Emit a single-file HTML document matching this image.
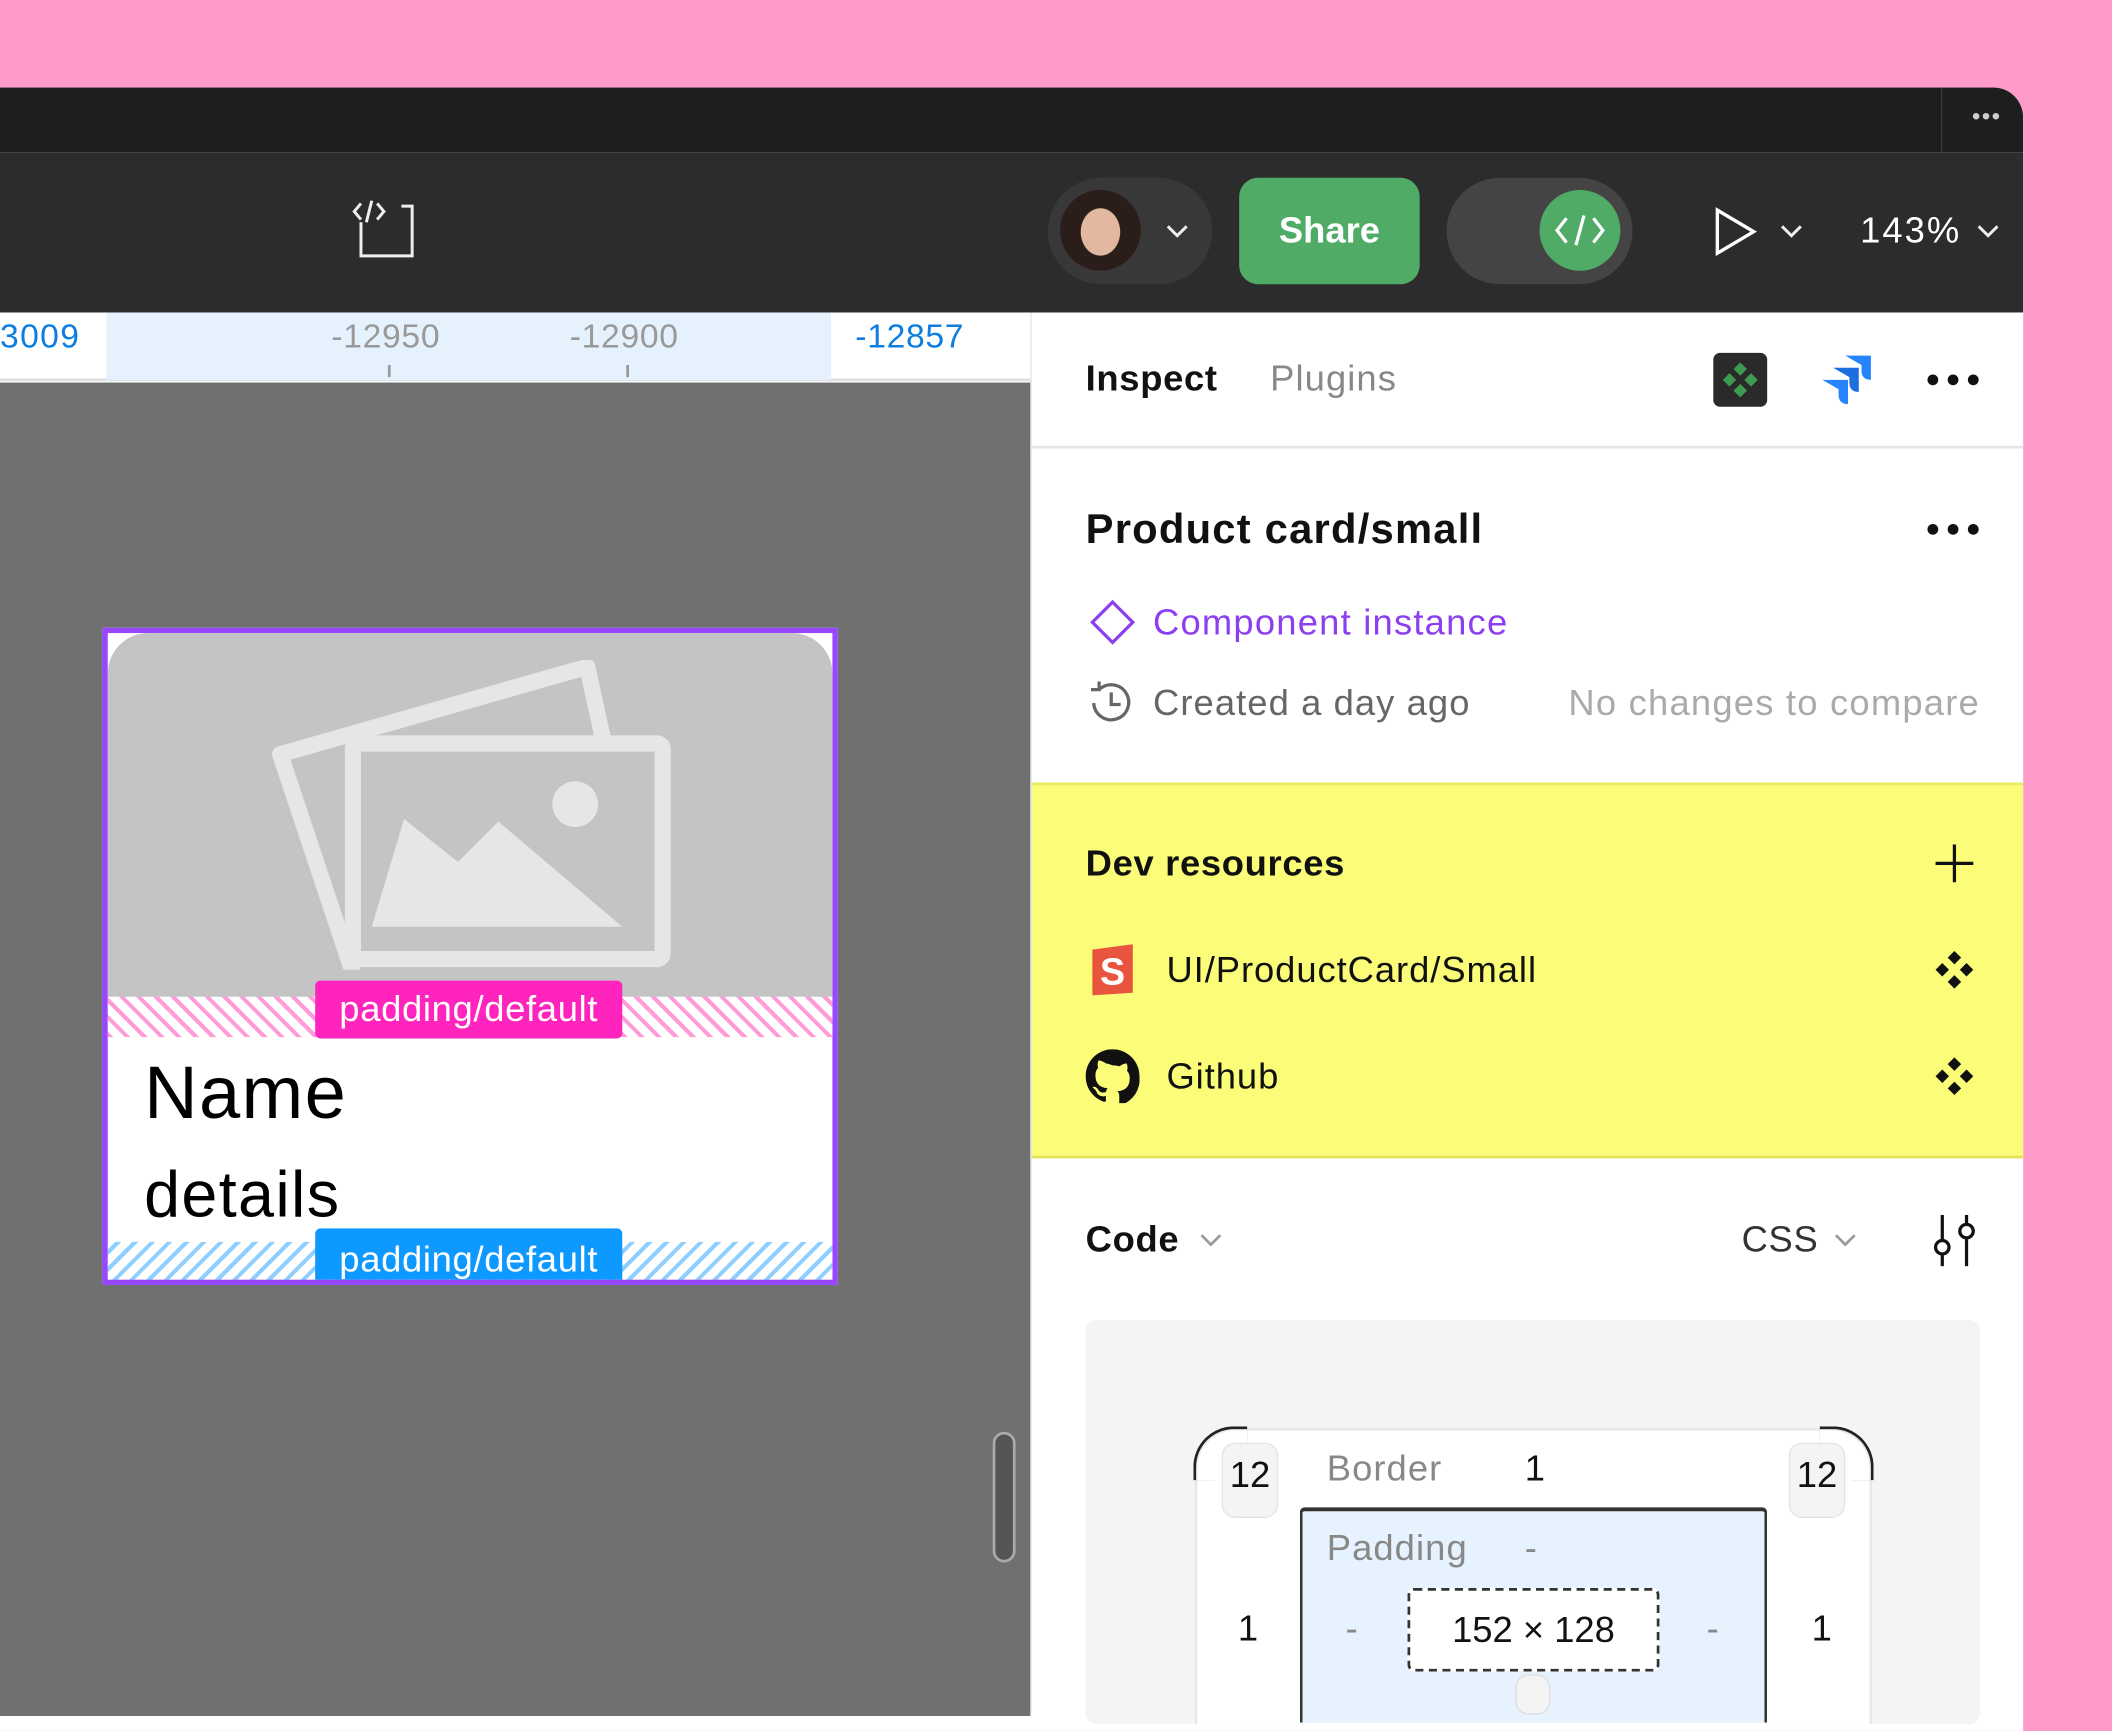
<!DOCTYPE html>
<html><head><meta charset="utf-8"><style>
*{margin:0;padding:0;box-sizing:border-box}
html,body{width:2112px;height:1688px;overflow:hidden;background:#ff9bc8;font-family:"Liberation Sans",sans-serif}
#s{position:absolute;left:0;top:0;width:1568px;height:1254px;transform:scale(1.34694);transform-origin:0 0}
.a{position:absolute}
.t{position:absolute;white-space:nowrap;line-height:1;letter-spacing:0.5px}
</style></head><body><div id="s">
<div class="a" style="left:0;top:65px;width:1502px;height:1220px;background:#fff;border-top-right-radius:22px;overflow:hidden">
 <div class="a" style="left:0;top:0;width:1502px;height:48px;background:#1e1e1e"></div>
 <div class="a" style="left:1441px;top:0;width:1px;height:48px;background:#3a3a3a"></div>
 <div class="t" style="left:1464px;top:12px;color:#ccc;font-size:18px;letter-spacing:1px">•••</div>
 <div class="a" style="left:0;top:48px;width:1502px;height:119px;background:#2c2c2c"></div>
</div>
<svg class="a" style="left:258px;top:145px" width="54" height="50" viewBox="0 0 54 50" fill="none" stroke="#eee" stroke-width="2.2"><path d="M10 6 L5 12 L10 18 M22 6 L27 12 L22 18 M18 4 L14 20"/><path d="M10 20 V45 H48 V8 H40"/></svg>
<div class="a" style="left:778px;top:132px;width:122px;height:79px;border-radius:40px;background:#383838"></div>
<div class="a" style="left:787px;top:141px;width:60px;height:60px;border-radius:50%;background:radial-gradient(ellipse 40% 48% at 50% 52%,#e2b8a0 0 60%,#2a1d1a 62% 100%),#7a4a3e"></div>
<svg class="a" style="left:864px;top:164px" width="20" height="14"><path d="M3 4 L10 11 L17 4" stroke="#eee" stroke-width="2.2" fill="none"/></svg>
<div class="a" style="left:920px;top:132px;width:134px;height:79px;border-radius:14px;background:#4fab66"></div>
<div class="t" style="left:920px;top:158px;width:134px;text-align:center;color:#fff;font-size:27px;font-weight:bold;letter-spacing:0">Share</div>
<div class="a" style="left:1074px;top:132px;width:138px;height:79px;border-radius:40px;background:#444"></div>
<div class="a" style="left:1143px;top:141px;width:60px;height:60px;border-radius:50%;background:#4fab66"></div>
<svg class="a" style="left:1153px;top:156px" width="40" height="30" fill="none" stroke="#fff" stroke-width="2.4"><path d="M10 6 L3 15 L10 24 M30 6 L37 15 L30 24 M23 4 L17 26"/></svg>
<svg class="a" style="left:1270px;top:152px" width="36" height="40" fill="none" stroke="#fff" stroke-width="2.5"><path d="M5 4 V36 L32 20 Z"/></svg>
<svg class="a" style="left:1320px;top:164px" width="20" height="14"><path d="M3 4 L10 11 L17 4" stroke="#eee" stroke-width="2.2" fill="none"/></svg>
<div class="t" style="left:1381px;top:158px;color:#fff;font-size:27px;letter-spacing:1.5px">143%</div>
<svg class="a" style="left:1466px;top:164px" width="20" height="14"><path d="M3 4 L10 11 L17 4" stroke="#eee" stroke-width="2.2" fill="none"/></svg>
<div class="a" style="left:0;top:232px;width:765px;height:51px;background:#fff;border-bottom:2px solid #e0e0e0"></div>
<div class="a" style="left:79px;top:232px;width:538px;height:50px;background:#e5f2fd"></div>
<div class="t" style="left:0;top:238px;color:#0d7de0;font-size:25px;letter-spacing:1px">3009</div>
<div class="t" style="left:246px;top:238px;color:#999;font-size:25px">-12950</div>
<div class="t" style="left:423px;top:238px;color:#999;font-size:25px">-12900</div>
<div class="t" style="left:635px;top:238px;color:#0d7de0;font-size:25px">-12857</div>
<div class="a" style="left:288px;top:271px;width:2px;height:9px;background:#999"></div>
<div class="a" style="left:465px;top:271px;width:2px;height:9px;background:#999"></div>
<div class="a" style="left:0;top:284px;width:765px;height:990px;background:#707070"></div>
<div class="a" style="left:737px;top:1063px;width:17px;height:97px;border:2px solid #aaa;border-radius:9px;background:#555"></div>
<div class="a" style="left:76px;top:466px;width:546px;height:488px;border:4px solid #9747ff;background:#fff;overflow:hidden">
 <div class="a" style="left:0;top:0;width:538px;height:272px;background:#c4c4c4;border-radius:30px 30px 0 0"></div>
 <svg class="a" style="left:120px;top:20px" width="300" height="230" fill="none" stroke="#e6e6e6" stroke-width="12" stroke-linejoin="round"><path d="M62 232 L8 70 L236 5 L248 60"/><rect x="62" y="62" width="230" height="160" rx="4"/><path d="M76 198 L100 118 L140 150 L170 120 L262 198 Z" fill="#e6e6e6" stroke="none"/><circle cx="227" cy="107" r="17" fill="#e6e6e6" stroke="none"/></svg>
 <div class="a" style="left:0;top:270px;width:538px;height:30px;background:repeating-linear-gradient(45deg,#ff9bd6 0 3px,#fff 3px 9px)"></div>
 <div class="a" style="left:154px;top:258px;width:228px;height:43px;background:#ff24bd;border-radius:4px"></div>
 <div class="t" style="left:154px;top:266px;width:228px;text-align:center;color:#fff;font-size:27px">padding/default</div>
 <div class="t" style="left:27px;top:314px;color:#000;font-size:55px;letter-spacing:1px">Name</div>
 <div class="t" style="left:27px;top:394px;color:#000;font-size:48px;letter-spacing:1px">details</div>
 <div class="a" style="left:0;top:452px;width:538px;height:32px;background:repeating-linear-gradient(-45deg,#8fcfff 0 3px,#fff 3px 9px)"></div>
 <div class="a" style="left:154px;top:442px;width:228px;height:44px;background:#0d99ff;border-radius:4px"></div>
 <div class="t" style="left:154px;top:452px;width:228px;text-align:center;color:#fff;font-size:27px">padding/default</div>
</div>
<div class="a" style="left:765px;top:232px;width:737px;height:1040px;background:#fff;border-left:1px solid #e5e5e5"></div>
<div class="t" style="left:806px;top:268px;color:#111;font-size:27px;font-weight:bold">Inspect</div>
<div class="t" style="left:943px;top:268px;color:#888;font-size:27px;letter-spacing:0.8px">Plugins</div>
<div class="a" style="left:1272px;top:262px;width:40px;height:40px;background:#2a2a2a;border-radius:5px"></div>
<svg class="a" style="left:1276px;top:266px" width="32" height="32" fill="#3d9a50"><path d="M16 3 L21 8 L16 13 L11 8Z M16 19 L21 24 L16 29 L11 24Z M8 11 L13 16 L8 21 L3 16Z M24 11 L29 16 L24 21 L19 16Z"/></svg>
<svg class="a" style="left:1352px;top:262px" width="40" height="40" fill="#2684ff"><path d="M18 2 H37 V20 Q30 20 30 13 V9 Z"/><path d="M9 11 H28 V29 Q21 29 21 22 V18 Z" fill="#1d6fe0"/><path d="M1 20 H20 V38 Q13 38 13 31 V27 Z" fill="#2684ff"/></svg>
<svg class="a" style="left:1430px;top:274px" width="42" height="16" fill="#111"><circle cx="5" cy="8" r="4"/><circle cx="20" cy="8" r="4"/><circle cx="35" cy="8" r="4"/></svg>
<div class="a" style="left:766px;top:331px;width:736px;height:2px;background:#e6e6e6"></div>
<div class="t" style="left:806px;top:377px;color:#111;font-size:31px;font-weight:bold;letter-spacing:0.9px">Product card/small</div>
<svg class="a" style="left:1430px;top:385px" width="42" height="16" fill="#111"><circle cx="5" cy="8" r="4"/><circle cx="20" cy="8" r="4"/><circle cx="35" cy="8" r="4"/></svg>
<svg class="a" style="left:808px;top:444px" width="36" height="36" fill="none" stroke="#8c3ff0" stroke-width="2.4"><path d="M18 3 L33 18 L18 33 L3 18Z"/></svg>
<div class="t" style="left:856px;top:449px;color:#8c3ff0;font-size:27px;letter-spacing:0.9px">Component instance</div>
<svg class="a" style="left:806px;top:504px" width="38" height="36" fill="none" stroke="#666" stroke-width="2.4"><path d="M6 18 A13 13 0 1 0 10 8"/><path d="M4 8 L10 8 L10 2"/><path d="M19 10 V19 H26"/></svg>
<div class="t" style="left:856px;top:509px;color:#666;font-size:27px;letter-spacing:0.8px">Created a day ago</div>
<div class="t" style="left:1100px;width:370px;text-align:right;top:509px;color:#aaa;font-size:27px;letter-spacing:0.9px">No changes to compare</div>
<div class="a" style="left:766px;top:581px;width:736px;height:279px;background:#fbfd78;border-top:2px solid #e9eb60;border-bottom:2px solid #e0e25a"></div>
<div class="t" style="left:806px;top:628px;color:#111;font-size:27px;font-weight:bold">Dev resources</div>
<svg class="a" style="left:1435px;top:625px" width="32" height="32" stroke="#111" stroke-width="2.4"><path d="M16 2 V30 M2 16 H30"/></svg>
<svg class="a" style="left:808px;top:699px" width="36" height="42"><path d="M3 6 L33 2 V38 L3 40 Z" fill="#e8543e"/><text x="18" y="32" text-anchor="middle" fill="#fff" font-family="Liberation Sans" font-weight="bold" font-size="28">S</text></svg>
<div class="t" style="left:866px;top:707px;color:#111;font-size:27px;letter-spacing:0.7px">UI/ProductCard/Small</div>
<svg class="a" style="left:1436px;top:705px" width="30" height="30" fill="#111"><path d="M15 1 L20 6 L15 11 L10 6Z M15 19 L20 24 L15 29 L10 24Z M6 10 L11 15 L6 20 L1 15Z M24 10 L29 15 L24 20 L19 15Z"/></svg>
<svg class="a" style="left:806px;top:779px" width="40" height="40" viewBox="0 0 16 16"><path fill="#111" d="M8 0C3.58 0 0 3.58 0 8c0 3.54 2.29 6.53 5.47 7.59.4.07.55-.17.55-.38v-1.33c-2.230.48-2.7-1.07-2.7-1.07-.36-.92-.89-1.17-.89-1.17-.73-.5.06-.49.06-.49.8.06 1.23.83 1.23.83.72 1.22 1.87.87 2.33.67.07-.52.28-.87.51-1.070-1.78-.2-3.65-.89-3.65-3.95 0-.87.31-1.59.82-2.15-.08-.2-.36-1.02.08-2.12 0 0 .67-.21 2.2.82A7.6 7.6 0 0 1 8 4.8c.68 0 1.36.09 2 .27 1.53-1.04 2.2-.82 2.2-.82.44 1.1.16 1.92.08 2.12.51.56.82 1.27.82 2.15 0 3.07-1.87 3.75-3.65 3.95.29.25.54.73.54 1.48v2.2c0 .21.15.46.55.38A8 8 0 0 0 16 8c0-4.42-3.58-8-8-8z"/></svg>
<div class="t" style="left:866px;top:786px;color:#111;font-size:27px;letter-spacing:0.7px">Github</div>
<svg class="a" style="left:1436px;top:784px" width="30" height="30" fill="#111"><path d="M15 1 L20 6 L15 11 L10 6Z M15 19 L20 24 L15 29 L10 24Z M6 10 L11 15 L6 20 L1 15Z M24 10 L29 15 L24 20 L19 15Z"/></svg>
<div class="t" style="left:806px;top:907px;color:#111;font-size:27px;font-weight:bold">Code</div>
<svg class="a" style="left:889px;top:913px" width="20" height="14"><path d="M3 4 L10 11 L17 4" stroke="#999" stroke-width="2" fill="none"/></svg>
<div class="t" style="left:1293px;top:907px;color:#333;font-size:27px">CSS</div>
<svg class="a" style="left:1360px;top:913px" width="20" height="14"><path d="M3 4 L10 11 L17 4" stroke="#999" stroke-width="2" fill="none"/></svg>
<svg class="a" style="left:1432px;top:900px" width="38" height="42" fill="none" stroke="#111" stroke-width="2.4"><path d="M10 2 V20 M10 32 V40 M28 2 V8 M28 20 V40"/><circle cx="10" cy="26" r="5"/><circle cx="28" cy="14" r="5"/></svg>
<div class="a" style="left:806px;top:980px;width:664px;height:300px;background:#f4f4f4;border-radius:8px"></div>
<div class="a" style="left:887px;top:1060px;width:503px;height:220px;background:#fff;border:2px solid #e8e8e8;border-bottom:none;border-radius:30px 30px 0 0"></div>
<div class="a" style="left:886px;top:1059px;width:40px;height:40px;border-left:2.5px solid #222;border-top:2.5px solid #222;border-top-left-radius:30px"></div>
<div class="a" style="left:1351px;top:1059px;width:40px;height:40px;border-right:2.5px solid #222;border-top:2.5px solid #222;border-top-right-radius:30px"></div>
<div class="a" style="left:907px;top:1071px;width:42px;height:56px;background:#f4f4f4;border:1.5px solid #e4e4e4;border-radius:10px"></div>
<div class="t" style="left:907px;top:1082px;width:42px;text-align:center;color:#111;font-size:27px;letter-spacing:0">12</div>
<div class="a" style="left:1328px;top:1071px;width:42px;height:56px;background:#f4f4f4;border:1.5px solid #e4e4e4;border-radius:10px"></div>
<div class="t" style="left:1328px;top:1082px;width:42px;text-align:center;color:#111;font-size:27px;letter-spacing:0">12</div>
<div class="t" style="left:985px;top:1077px;color:#888;font-size:27px;letter-spacing:0.8px">Border</div>
<div class="t" style="left:1132px;top:1077px;color:#111;font-size:27px">1</div>
<div class="a" style="left:965px;top:1119px;width:347px;height:160px;background:#e6f2fd;border:2px solid #333;border-top-width:3px;border-bottom:none;border-radius:4px 4px 0 0"></div>
<div class="t" style="left:985px;top:1136px;color:#888;font-size:27px;letter-spacing:0.8px">Padding</div>
<div class="t" style="left:1132px;top:1136px;color:#888;font-size:27px">-</div>
<div class="t" style="left:919px;top:1196px;color:#111;font-size:27px">1</div>
<div class="t" style="left:1345px;top:1196px;color:#111;font-size:27px">1</div>
<div class="t" style="left:999px;top:1196px;color:#888;font-size:27px">-</div>
<div class="t" style="left:1267px;top:1196px;color:#888;font-size:27px">-</div>
<div class="a" style="left:1045px;top:1179px;width:187px;height:62px;background:#fff;border:2px dashed #333;border-radius:5px"></div>
<div class="t" style="left:1045px;top:1197px;width:187px;text-align:center;color:#111;font-size:27px;letter-spacing:0">152 × 128</div>
<div class="a" style="left:1125px;top:1243px;width:26px;height:30px;background:#f4f4f4;border:1.5px solid #ddd;border-radius:10px"></div>
</div></body></html>
